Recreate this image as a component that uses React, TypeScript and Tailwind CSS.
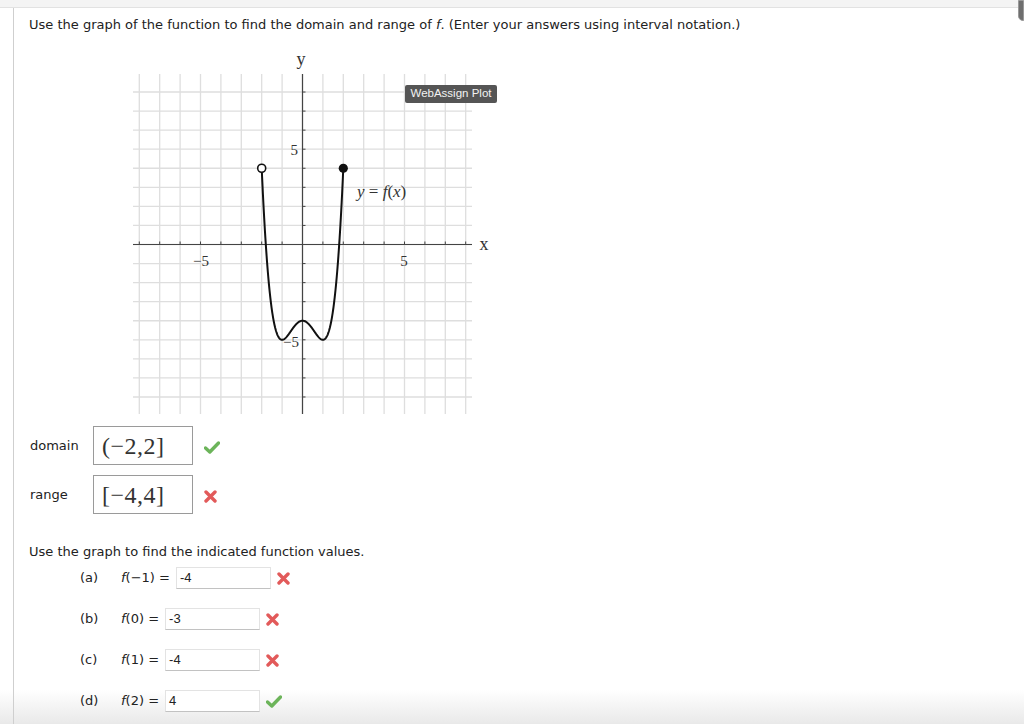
import React from "react";

const X0 = 302.5;
const Y0 = 244.5;
const SX = 20.4;
const SY = 19.06;

const px = (x: number) => X0 + x * SX;
const py = (y: number) => Y0 - y * SY;

const ticks = Array.from({ length: 17 }, (_, i) => i - 8);

const curve = Array.from({ length: 201 }, (_, i) => {
  const x = -2 + i * 0.02;
  const y = x ** 4 - 2 * x ** 2 - 4;
  return `${px(x).toFixed(2)},${py(y).toFixed(2)}`;
}).join(" ");

function Check() {
  return (
    <svg width="16" height="13" viewBox="0 0 16 13" className="shrink-0">
      <path d="M1.5 7 L5.8 11 L14.5 2" fill="none" stroke="#6cb45a" strokeWidth="3.4" strokeLinecap="round" strokeLinejoin="round" />
    </svg>
  );
}

function Cross() {
  return (
    <svg width="13" height="13" viewBox="0 0 13 13" className="shrink-0">
      <path d="M2 2 L11 11 M11 2 L2 11" fill="none" stroke="#e25a5a" strokeWidth="3.4" strokeLinecap="round" />
    </svg>
  );
}

function Graph() {
  return (
    <div className="relative ml-[91px] mt-[17px] h-[370px] w-[380px]">
      <svg width="380" height="370" viewBox="120 50 380 370" className="block">
        {ticks.map((k) => (
          <line key={"v" + k} x1={px(k)} y1={74} x2={px(k)} y2={414} stroke="#dedede" strokeWidth="1.3" />
        ))}
        {ticks.map((k) => (
          <line key={"h" + k} x1={133} y1={py(k)} x2={472} y2={py(k)} stroke="#dedede" strokeWidth="1.3" />
        ))}
        {/* axes */}
        <line x1={133} y1={Y0} x2={472} y2={Y0} stroke="#444" strokeWidth="1.2" />
        <line x1={X0} y1={74} x2={X0} y2={414} stroke="#444" strokeWidth="1.2" />
        {ticks.map((k) => (
          <line key={"tx" + k} x1={px(k)} y1={Y0 - 3} x2={px(k)} y2={Y0} stroke="#444" strokeWidth="1" />
        ))}
        {ticks.map((k) => (
          <line key={"ty" + k} x1={X0} y1={py(k)} x2={X0 + 3} y2={py(k)} stroke="#444" strokeWidth="1" />
        ))}
        <g fontFamily="'Liberation Serif', serif" fill="#333">
          <text x={301} y={65} fontSize="18" textAnchor="middle">y</text>
          <text x={484} y={250} fontSize="18" textAnchor="middle">x</text>
          <text x={298} y={155} fontSize="15" textAnchor="end">5</text>
          <text x={201} y={266} fontSize="15" textAnchor="middle">−5</text>
          <text x={404} y={266} fontSize="15" textAnchor="middle">5</text>
          <text x={299} y={347} fontSize="15" textAnchor="end">−5</text>
          <text x={357} y={197} fontSize="17" fontStyle="italic">
            y <tspan fontStyle="normal">=</tspan> f<tspan fontStyle="normal">(</tspan>x<tspan fontStyle="normal">)</tspan>
          </text>
        </g>
        <polyline points={curve} fill="none" stroke="#111" strokeWidth="2" strokeLinejoin="round" />
        <circle cx={px(-2)} cy={py(4)} r="4" fill="#fff" stroke="#111" strokeWidth="1.6" />
        <circle cx={px(2)} cy={py(4)} r="4.6" fill="#111" />
      </svg>
      <div className="absolute left-[285px] top-[35px] flex h-[18px] w-[92px] items-center justify-center rounded-[2px] bg-[#555] text-[11.5px] text-[#f2f2f2] [font-family:'Liberation_Sans',Arial,sans-serif]">
        WebAssign Plot
      </div>
    </div>
  );
}

function IntervalRow({ label, value, ok }: { label: string; value: string; ok: boolean }) {
  return (
    <div className="flex items-center">
      <span className="w-[64px] pl-px">{label}</span>
      <div className="flex h-[39px] w-[100px] items-center border border-[#9a9a9a] pl-[8px] text-[24px] leading-none tracking-[0.5px] text-[#333] [font-family:'Liberation_Serif',serif]">
        {value}
      </div>
      <span className="ml-[11px] mt-[3px] flex">{ok ? <Check /> : <Cross />}</span>
    </div>
  );
}

function ValueRow({
  part,
  arg,
  val,
  ok,
}: {
  part: string;
  arg: string;
  val: string;
  ok: boolean;
}) {
  return (
    <div className="flex h-[21px] items-center">
      <span className="w-[41px]">({part})</span>
      <span className="whitespace-pre">
        <i>f</i>({arg}) =
      </span>
      <div className="ml-[6px] flex h-[22px] w-[95px] items-center border border-[#e3e3e3] border-b-[#c2c2c2] bg-white pl-[3px] text-[13px] text-[#222] [font-family:'Liberation_Sans',Arial,sans-serif]">
        {val}
      </div>
      <span className="ml-[6px] mt-[2px] flex">{ok ? <Check /> : <Cross />}</span>
    </div>
  );
}

export default function App() {
  return (
    <div className="relative h-[724px] w-[1024px] overflow-hidden bg-white text-[13px] text-[#222] [font-family:'DejaVu_Sans',Verdana,sans-serif]">
      <div className="h-[8px] border-b border-[#e2e2e2] bg-[#f4f4f4]" />
      {/* bottom fade */}
      <div className="absolute bottom-0 left-0 right-0 h-[34px] bg-gradient-to-b from-white to-[#e9e9e9]" />
      <div className="relative ml-[13px] h-[716px] border-l border-[#cfcfcf] pl-[15px] pt-[9px]">
        <p className="leading-[16px]">
          Use the graph of the function to find the domain and range of <i>f</i>. (Enter your answers using interval notation.)
        </p>

        <Graph />

        <div className="mt-[6px] flex flex-col gap-[10px]">
          <IntervalRow label="domain" value="(−2,2]" ok />
          <IntervalRow label="range" value="[−4,4]" ok={false} />
        </div>

        <p className="mt-[30px] leading-[16px]">Use the graph to find the indicated function values.</p>

        <div className="ml-[51px] mt-[7px] flex flex-col gap-[20px]">
          <ValueRow part="a" arg="−1" val="-4" ok={false} />
          <ValueRow part="b" arg="0" val="-3" ok={false} />
          <ValueRow part="c" arg="1" val="-4" ok={false} />
          <ValueRow part="d" arg="2" val="4" ok />
        </div>
      </div>
      {/* scrollbar thumb */}
      <div className="absolute right-0 top-0 h-[21px] w-[6px] rounded-bl-[5px] border border-[#999] bg-[#6e6e6e]" />
    </div>
  );
}
